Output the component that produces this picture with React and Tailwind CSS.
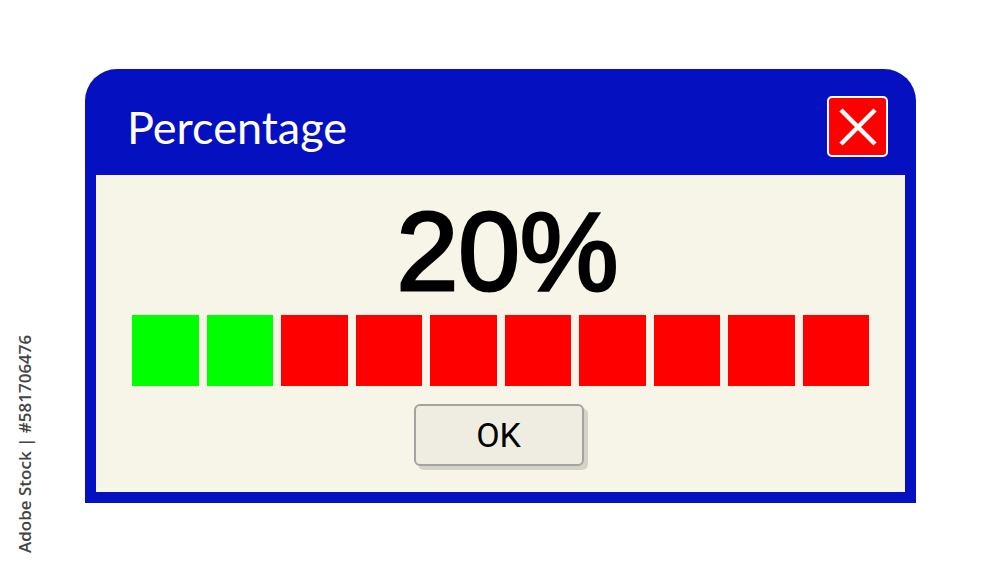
import React from 'react'

// 10 cells, first two filled
const CELLS = Array.from({ length: 10 }, (_, i) => i < 2)

function CloseButton() {
  return (
    <button className="w-[61px] h-[61px] bg-[#ff0000] border-2 border-white rounded-[5px] flex items-center justify-center">
      <svg width="40" height="40" viewBox="0 0 40 40">
        <path d="M3 3 L37 37 M37 3 L3 37" stroke="white" strokeWidth="4.5" strokeLinecap="butt" />
      </svg>
    </button>
  )
}

export default function App() {
  return (
    <div className="relative w-[1000px] h-[572px] bg-white pt-[69px] pl-[85px]">
      <div className="w-[831px] h-[434px] bg-[#0510c0] rounded-t-[32px] px-[11px] pb-[11px] flex flex-col">
        <div className="h-[106px] shrink-0 flex items-start justify-between pl-[31px] pr-[17px] pt-[27px]">
          <span className="text-white text-[45px] leading-none mt-[9px] font-['Lato',sans-serif]">Percentage</span>
          <CloseButton />
        </div>
        <div className="flex-1 bg-[#f7f5e7] flex flex-col items-center px-[36px]">
          <div className="text-[111px] leading-none mt-[22px] ml-[14px] text-black [-webkit-text-stroke:3px_black] font-['Liberation_Sans',Arial,sans-serif]">20%</div>
          <div className="w-full flex gap-[8px] mt-[7px]">
            {CELLS.map((on, i) => (
              <div key={i} className={`flex-1 h-[71px] ${on ? 'bg-[#00ff00]' : 'bg-[#ff0000]'}`} />
            ))}
          </div>
          <button className="mt-[18px] -ml-[4px] w-[170px] h-[62px] bg-[#efede1] border-2 border-[#a3a3a0] rounded-[6px] shadow-[4px_4px_0_#d4d3c8] text-[34px] text-black font-['Roboto',sans-serif]">
            OK
          </button>
        </div>
      </div>
      <div className="absolute left-[12px] top-[553px] origin-top-left -rotate-90 whitespace-nowrap text-[17px] font-semibold text-[#444] font-['Open_Sans',sans-serif]">
        Adobe Stock | #581706476
      </div>
    </div>
  )
}
